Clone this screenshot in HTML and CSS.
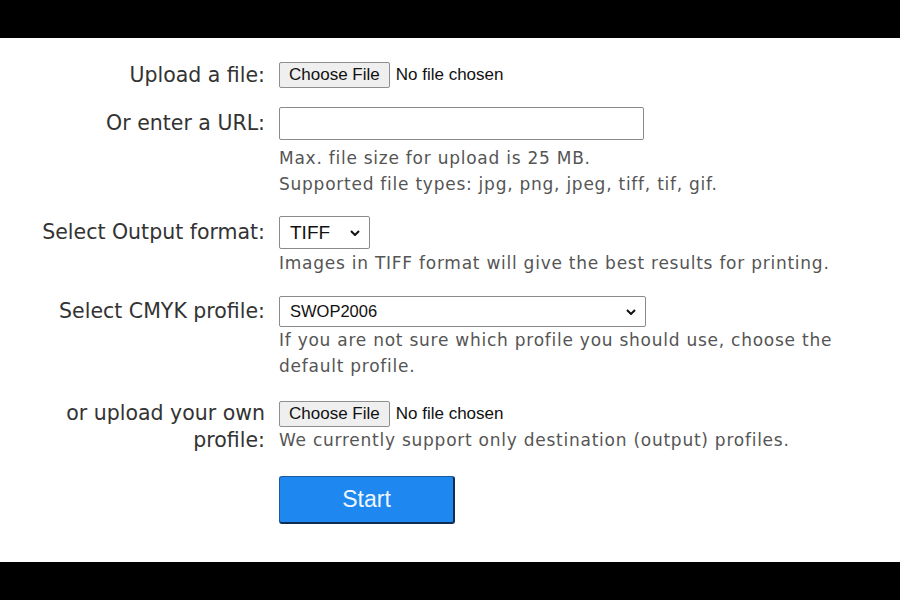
FILE: index.html
```html
<!DOCTYPE html>
<html>
<head>
<meta charset="utf-8">
<link rel="stylesheet" href="styles.css">
</head>
<body>
<div class="page">
  <form class="form">
    <div class="row row-upload">
      <div class="label lh26">Upload a file:</div>
      <div class="field">
        <div class="file"><span class="file-btn">Choose File</span><span class="file-name">No file chosen</span></div>
      </div>
    </div>
    <div class="row row-url">
      <div class="label lh33">Or enter a URL:</div>
      <div class="field">
        <div class="text-input"></div>
        <p class="hint hint-after-input">Max. file size for upload is 25 MB.<br>Supported file types: jpg, png, jpeg, tiff, tif, gif.</p>
      </div>
    </div>
    <div class="row row-format">
      <div class="label lh33">Select Output format:</div>
      <div class="field">
        <div class="select select-format"><span class="select-val">TIFF</span><svg class="chev" viewBox="0 0 10 6" width="10" height="6"><path d="M1 1 L5 5 L9 1" fill="none" stroke="#111" stroke-width="2"/></svg></div>
        <p class="hint hint-after-format">Images in TIFF format will give the best results for printing.</p>
      </div>
    </div>
    <div class="row row-profile">
      <div class="label lh31">Select CMYK profile:</div>
      <div class="field">
        <div class="select select-profile"><span class="select-val small">SWOP2006</span><svg class="chev" viewBox="0 0 10 6" width="10" height="6"><path d="M1 1 L5 5 L9 1" fill="none" stroke="#111" stroke-width="2"/></svg></div>
        <p class="hint">If you are not sure which profile you should use, choose the<br>default profile.</p>
      </div>
    </div>
    <div class="row row-own">
      <div class="label lh27 own-label">or upload your own<br>profile:</div>
      <div class="field">
        <div class="file"><span class="file-btn">Choose File</span><span class="file-name">No file chosen</span></div>
        <p class="hint">We currently support only destination (output) profiles.</p>
      </div>
    </div>
    <div class="row row-start">
      <div class="label"></div>
      <div class="field">
        <span class="start">Start</span>
      </div>
    </div>
  </form>
</div>
</body>
</html>
```

FILE: styles.css
```css
html, body {
  margin: 0;
  padding: 0;
  background: #000;
}
.page {
  margin-top: 38px;
  height: 524px;
  background: #fff;
  overflow: hidden;
}
.form {
  padding-top: 24px;
  display: flex;
  flex-direction: column;
}
.row {
  display: flex;
  align-items: flex-start;
}
.label {
  width: 265px;
  padding-right: 14px;
  box-sizing: content-box;
  flex: none;
  text-align: right;
  font-family: "DejaVu Sans", Verdana, sans-serif;
  font-size: 20.5px;
  color: #333;
  white-space: nowrap;
}
.lh26 { line-height: 26px; }
.lh33 { line-height: 33px; }
.lh31 { line-height: 31px; }
.lh27 { line-height: 27px; }
.own-label { margin-top: -1px; }
.field {
  display: flex;
  flex-direction: column;
  align-items: flex-start;
}
.row-url { margin-top: 19px; }
.row-format { margin-top: 19px; }
.row-profile { margin-top: 20px; }
.row-own { margin-top: 22px; }
.row-start { margin-top: 22px; }

.file {
  display: flex;
  align-items: center;
  height: 26px;
  font-family: "Liberation Sans", Arial, sans-serif;
  font-size: 17px;
  color: #111;
}
.file-btn {
  height: 26px;
  box-sizing: border-box;
  padding: 0 9px;
  line-height: 24px;
  background: #efefef;
  border: 1px solid #8f8f8f;
  border-radius: 2px;
}
.file-name {
  margin-left: 6px;
}
.text-input {
  width: 365px;
  height: 33px;
  box-sizing: border-box;
  border: 1px solid #8a8a8a;
  border-radius: 2px;
  background: #fff;
}
.hint {
  margin: 0;
  font-family: "DejaVu Sans", Verdana, sans-serif;
  font-size: 17px;
  letter-spacing: 0.75px;
  line-height: 26px;
  color: #555;
  white-space: nowrap;
}
.hint-after-input { margin-top: 5px; }
.hint-after-format { margin-top: 1px; }

.select {
  display: flex;
  align-items: center;
  justify-content: space-between;
  box-sizing: border-box;
  border: 1px solid #8a8a8a;
  border-radius: 2px;
  background: #fff;
  padding: 0 9px 0 10px;
  font-family: "Liberation Sans", Arial, sans-serif;
  color: #111;
}
.select-format {
  width: 91px;
  height: 33px;
  font-size: 19px;
}
.select-profile {
  width: 367px;
  height: 31px;
  font-size: 16.5px;
}
.chev { display: block; }

.start {
  display: flex;
  align-items: center;
  justify-content: center;
  width: 176px;
  height: 48px;
  box-sizing: border-box;
  background: #1e88f0;
  border: 1px solid #1a5c9e;
  border-right: 2px solid #0d2e52;
  border-bottom: 2px solid #0d2e52;
  border-radius: 3px;
  color: #eef6ff;
  font-family: "Liberation Sans", Arial, sans-serif;
  font-size: 23px;
}
```
